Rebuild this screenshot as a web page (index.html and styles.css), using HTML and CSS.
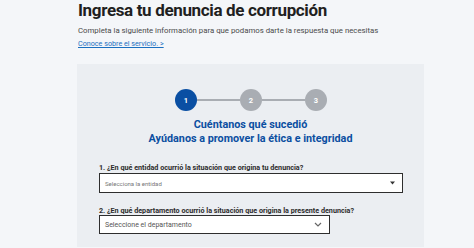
FILE: index.html
```html
<!DOCTYPE html>
<html lang="es">
<head>
<meta charset="utf-8">
<link rel="stylesheet" href="styles.css">
</head>
<body>
<main class="page">
  <h1 class="title">Ingresa tu denuncia de corrupción</h1>
  <p class="intro">Completa la siguiente información para que podamos darte la respuesta que necesitas</p>
  <a class="link" href="#">Conoce sobre el servicio. &gt;</a>
  <section class="card">
    <div class="steps">
      <span class="step active">1</span>
      <span class="bar"></span>
      <span class="step">2</span>
      <span class="bar"></span>
      <span class="step">3</span>
    </div>
    <h2 class="heading">Cuéntanos qué sucedió<br>Ayúdanos a promover la ética e integridad</h2>
    <div class="field first">
      <label class="label">1. ¿En qué entidad ocurrió la situación que origina tu denuncia?</label>
      <div class="select wide">
        <span class="ph small">Selecciona la entidad</span>
        <svg class="caret" width="5" height="4" viewBox="0 0 5 4"><path d="M0 0.5h5L2.5 3.5z" fill="#333"/></svg>
      </div>
    </div>
    <div class="field second">
      <label class="label">2. ¿En qué departamento ocurrió la situación que origina la presente denuncia?</label>
      <div class="select narrow">
        <span class="ph">Seleccione el departamento</span>
        <svg class="chev" width="8" height="5" viewBox="0 0 8 5"><path d="M1 1l3 3 3-3" fill="none" stroke="#666" stroke-width="1.2"/></svg>
      </div>
    </div>
  </section>
</main>
</body>
</html>
```
FILE: styles.css
```css
html, body {
  margin: 0;
  padding: 0;
  background: #f4f6f9;
  font-family: Roboto, "Liberation Sans", sans-serif;
  overflow: hidden;
}
.page {
  width: 347px;
  margin-left: 77px;
  height: 248px;
}
.title {
  margin: 0;
  font-size: 17px;
  line-height: 20px;
  font-weight: 700;
  color: #1f1f21;
  letter-spacing: -0.35px;
  padding-left: 1px;
}
.intro {
  margin: 5px 0 0 1px;
  font-size: 7.8px;
  line-height: 11px;
  color: #4a4a4a;
}
.link {
  display: block;
  width: fit-content;
  margin: 2px 0 0 1px;
  font-size: 7.2px;
  line-height: 11px;
  color: #1a6fc0;
  text-decoration: underline;
}
.card {
  margin-top: 15px;
  background: #ebeef2;
  height: 183px;
  padding-top: 25px;
  box-sizing: border-box;
}
.steps {
  display: flex;
  align-items: center;
  justify-content: center;
  padding-left: 1px;
}
.step {
  width: 22px;
  height: 22px;
  border-radius: 50%;
  background: #a9adb3;
  color: #fff;
  font-size: 7.5px;
  font-weight: 700;
  display: flex;
  align-items: center;
  justify-content: center;
}
.step.active {
  background: #0a4fa3;
}
.bar {
  width: 43px;
  height: 2px;
  background: #a9adb3;
}
.heading {
  margin: 7px 0 0;
  text-align: center;
  font-size: 10.8px;
  line-height: 14px;
  font-weight: 700;
  color: #0b4fa1;
}
.field {
  margin-left: 22px;
}
.field.first {
  margin-top: 17px;
}
.field.second {
  margin-top: 13px;
}
.label {
  display: block;
  font-size: 7.2px;
  line-height: 10px;
  font-weight: 700;
  color: #2b2b2b;
}
.select {
  margin-top: 0;
  height: 20px;
  box-sizing: border-box;
  border: 1.5px solid #2e2e2e;
  background: #fff;
  display: flex;
  align-items: center;
  justify-content: space-between;
  padding: 0 7px 0 5px;
}
.select.wide { width: 304px; }
.select.narrow { width: 231px; height: 19px; margin-top: -1px; }
.ph {
  font-size: 7px;
  color: #555;
}
.ph.small {
  font-size: 6px;
  color: #777;
}
```
